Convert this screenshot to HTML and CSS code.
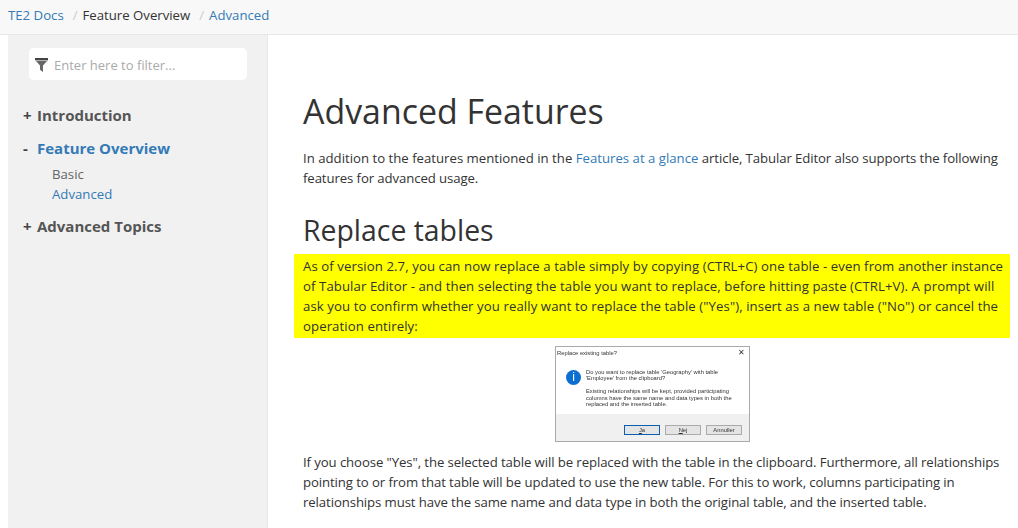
FILE: index.html
```html
<!DOCTYPE html>
<html lang="en">
<head>
<meta charset="utf-8">
<title>Advanced Features</title>
<link rel="stylesheet" href="styles.css">
</head>
<body>
<nav class="topbar">
  <a class="crumb first" href="#">TE2 Docs</a>
  <span class="sep">/</span><span class="crumb current">Feature Overview</span>
  <span class="sep">/</span><a class="crumb" href="#">Advanced</a>
</nav>
<div class="layout">
  <aside class="sidebar">
    <div class="filter">
      <svg class="funnel" width="13" height="14" viewBox="0 0 13 14"><path d="M0 0h13v2.4H0z" fill="#444"/><path d="M1 3h11L8 7.4V14L5 11.8V7.4z" fill="#666"/></svg>
      <span class="placeholder">Enter here to filter...</span>
    </div>
    <ul class="toc">
      <li class="toc-item"><span class="mark">+</span><a class="toc-link">Introduction</a></li>
      <li class="toc-item open"><span class="mark">-</span><a class="toc-link active">Feature Overview</a>
        <ul class="sub">
          <li>Basic</li>
          <li class="sub-active">Advanced</li>
        </ul>
      </li>
      <li class="toc-item"><span class="mark">+</span><a class="toc-link">Advanced Topics</a></li>
    </ul>
  </aside>
  <main class="content">
    <h1>Advanced Features</h1>
    <p class="intro">In addition to the features mentioned in the <a href="#">Features at a glance</a> <span class="intro-tail">article, Tabular Editor also supports the following features for advanced usage.</span></p>
    <h2>Replace tables</h2>
    <p class="highlight">As of version 2.7, you can now replace a table simply by copying (CTRL+C) one table - even from another instance of Tabular Editor - and then selecting the table you want to replace, before hitting paste (CTRL+V). A prompt will ask you to confirm whether you really want to replace the table ("Yes"), insert as a new table ("No") or cancel the operation entirely:</p>
    <div class="figure">
      <div class="dialog">
        <div class="dlg-title"><span>Replace existing table?</span><span class="dlg-x">✕</span></div>
        <div class="dlg-body">
          <div class="dlg-icon">i</div>
          <div class="dlg-text">
            <p>Do you want to replace table 'Geography' with table<br>'Employee' from the clipboard?</p>
            <p>Existing relationships will be kept, provided participating<br>columns have the same name and data types in both the<br>replaced and the inserted table.</p>
          </div>
        </div>
        <div class="dlg-foot">
          <span class="dlg-btn primary"><u>J</u>a</span>
          <span class="dlg-btn"><u>N</u>ej</span>
          <span class="dlg-btn">Annuller</span>
        </div>
      </div>
    </div>
    <p class="after">If you choose "Yes", the selected table will be replaced with the table in the clipboard. Furthermore, all relationships pointing to or from that table will be updated to use the new table. For this to work, columns participating in relationships must have the same name and data type in both the original table, and the inserted table.</p>
  </main>
</div>
</body>
</html>
```
FILE: styles.css
```css
* { box-sizing: border-box; }
html, body { height: 100%; }
body {
  margin: 0;
  height: 528px;
  overflow: hidden;
  background: #fff;
  color: #333;
  font-family: "Open Sans", sans-serif;
  font-size: 13.2px;
  line-height: 20px;
  display: flex;
  flex-direction: column;
}
a { color: #337ab7; text-decoration: none; }
.topbar {
  height: 35px;
  flex: none;
  padding: 5px 0 0 8px;
  background: #f8f8f8;
  border-bottom: 1px solid #e7e7e7;
  display: flex;
}
.sep { color: #ccc; margin: 0 5px 0 9px; }
.current { color: #333; }
.layout { flex: 1; display: flex; min-height: 0; }
.sidebar {
  width: 260px;
  margin-left: 8px;
  padding: 13px 20px 0 21px;
  flex: none;
  background: #f1f1f1;
  border-right: 1px solid #e7e7e7;
}
.filter {
  height: 32px;
  width: 218px;
  background: #fff;
  border-radius: 5px;
  display: flex;
  align-items: center;
  padding-left: 6px;
}
.funnel { margin-right: 6px; margin-top: 2px; }
.placeholder { color: #aaa; font-size: 13px; padding-top: 2px; }
.toc { list-style: none; margin: 24px 0 0; padding: 0; }
.toc-item { position: relative; padding-left: 8px; margin-bottom: 10px; font-size: 15px; font-weight: 700; line-height: 23px; color: #555; }
.mark { position: absolute; left: -6px; top: 0; width: 14px; color: #444; }
.toc-link { color: #555; }
.toc-link.active { color: #337ab7; }
.sub { list-style: none; margin: 4px 0 11px; padding: 0 0 0 15px; font-size: 13.2px; font-weight: 400; line-height: 20px; color: #666; }
.sub-active { color: #337ab7; }
.content { flex: 1; padding: 0 8px 0 35px; min-width: 0; }
h1 { margin: 54px 0 0; font-size: 33.9px; font-weight: 400; line-height: 44px; color: #333; }
.intro { margin: 15px 0 0; }
.intro-tail { letter-spacing: -0.1px; }
h2 { margin: 22px 0 0; font-size: 28.4px; font-weight: 400; line-height: 40px; color: #333; }
.highlight {
  margin: 4px 0 0 -9px;
  padding: 2px 4px 0 9px;
  height: 84px;
  background: #ff0;
  letter-spacing: 0.08px;
}
.figure { margin-top: 8px; display: flex; justify-content: center; }
.dialog {
  width: 195px;
  height: 96px;
  border: 1px solid #aaa;
  background: #fff;
  display: flex;
  flex-direction: column;
  font-family: "Liberation Sans", sans-serif;
  font-size: 5.8px;
  line-height: 6.7px;
  color: #333;
  margin-right: 8px;
  filter: blur(0.3px);
}
.dlg-title { display: flex; justify-content: space-between; padding: 3px 4px 0 1px; height: 14px; }
.dlg-x { font-size: 8px; }
.dlg-body { flex: 1; display: flex; padding: 8px 0 0 10px; }
.dlg-icon {
  width: 15px; height: 15px; border-radius: 50%;
  background: #0a6fd1; color: #fff;
  font-size: 12px; line-height: 15px; text-align: center;
  margin: 1px 5px 0 0; flex: none;
}
.dlg-text p { margin: 0 0 6px; }
.dlg-foot {
  height: 28px;
  background: #f0f0f0;
  display: flex;
  justify-content: flex-end;
  align-items: center;
  gap: 5px;
  padding: 5px 7px 0 0;
}
.dlg-btn { width: 36px; height: 10px; line-height: 8px; text-align: center; border: 1px solid #aaa; background: #e4e4e4; }
.dlg-btn.primary { border-color: #0a5fb0; }
.after { margin: 10px 0 0; letter-spacing: -0.1px; }
```
